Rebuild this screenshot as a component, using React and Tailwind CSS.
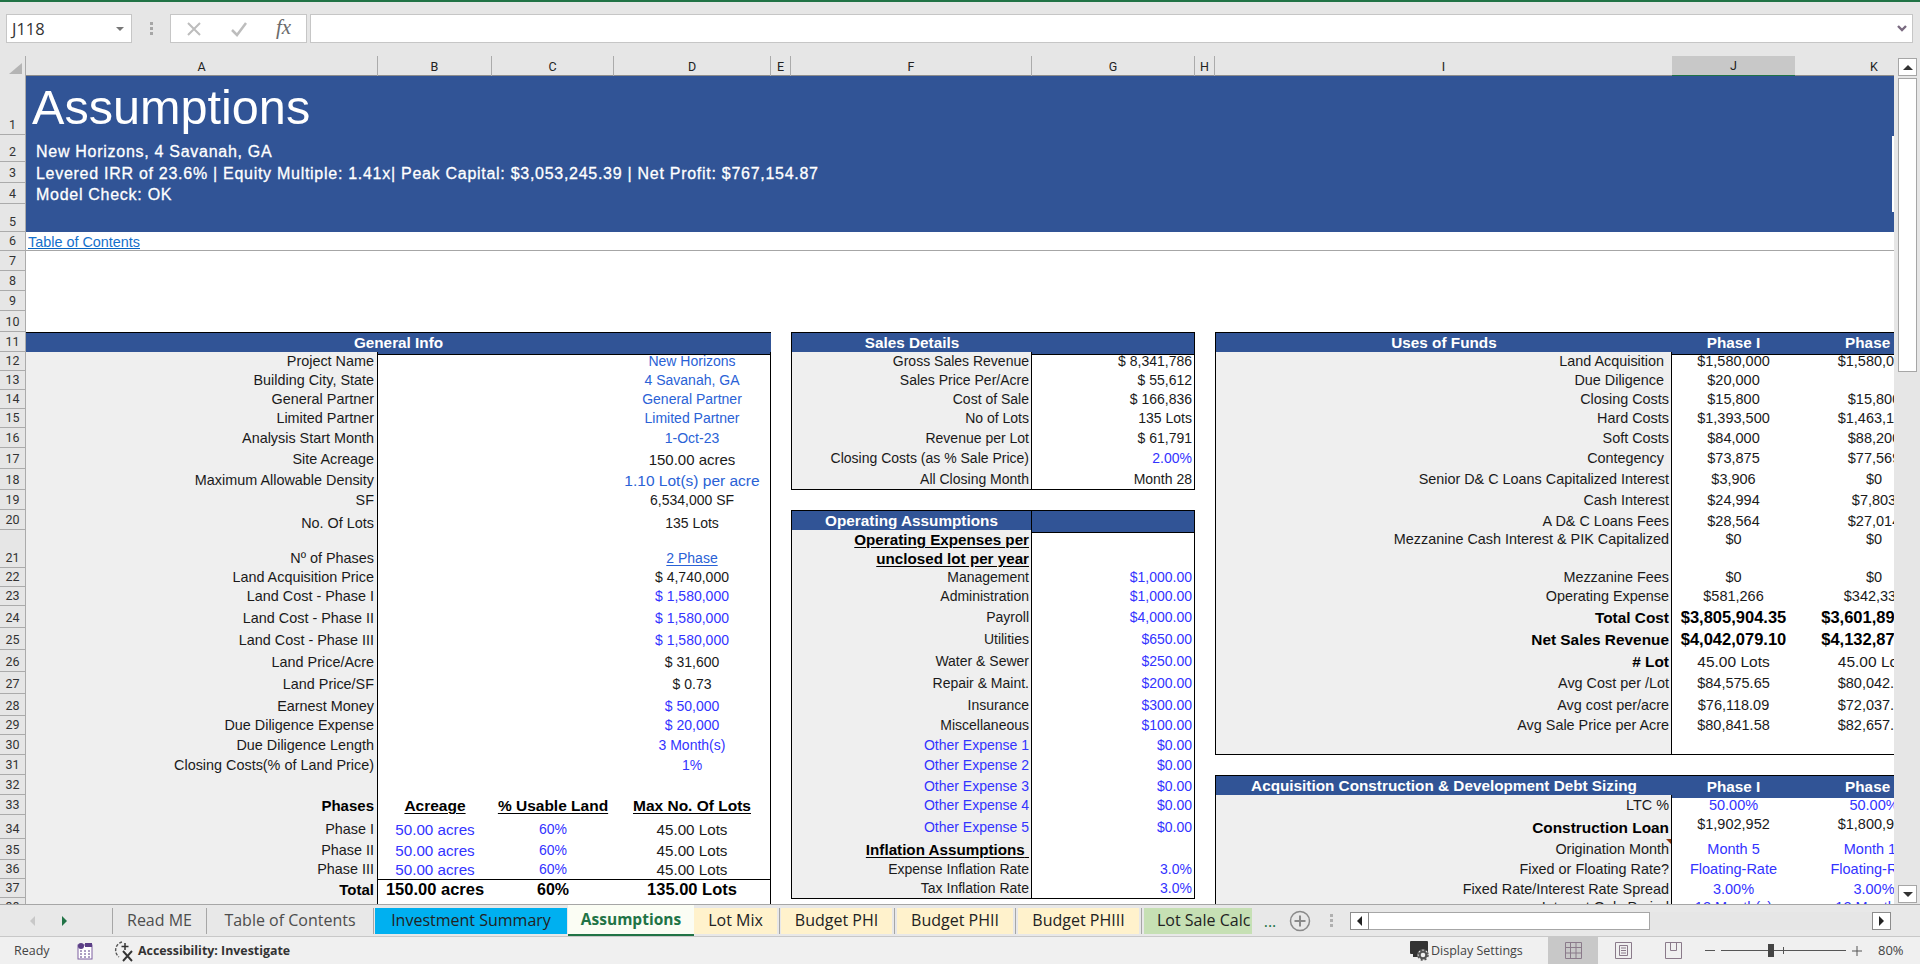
import React from 'react';

const COLS = 'grid-cols-[352px_114px_122px_157px_20px_241px_163px_20px_457px_123px_158px]';
const BLUE = 'text-[#3333ff]';
const SKY = 'text-[#2a62d6]';
const INK = 'text-[#1a1a1a]';
const BANNER = "bg-[#315496] text-white text-[16px] tracking-[0.72px] [-webkit-text-stroke:0.3px_white] pl-[10px]";

const colHeads = [
  ['A', 'border-r'], ['B', 'border-r'], ['C', 'border-r'], ['D', 'border-r'], ['E', 'border-r'], ['F', 'border-r'],
  ['G', 'border-r'], ['H', 'border-r'], ['I', ''], ['J', ''], ['K', ''],
];

// rows of the sheet, h is the row height as Excel drew it at 80%
const rows = [
  { n: 7, h: 'h-[20px]' },
  { n: 8, h: 'h-[20px]' },
  { n: 9, h: 'h-[20px]' },
  { n: 10, h: 'h-[21px]' },
  { n: 11, h: 'h-[20px]', head: true },
  { n: 12, h: 'h-[19px]', a: 'Project Name', d: 'New Horizons', dc: SKY, f: 'Gross Sales Revenue', g: '$ 8,341,786', i: 'Land Acquisition', ii: 1, j: '$1,580,000', k: '$1,580,000' },
  { n: 13, h: 'h-[19px]', a: 'Building City, State', d: '4 Savanah, GA', dc: SKY, f: 'Sales Price Per/Acre', g: '$ 55,612', i: 'Due Diligence', ii: 1, j: '$20,000' },
  { n: 14, h: 'h-[19px]', a: 'General Partner', d: 'General Partner', dc: SKY, f: 'Cost of Sale', g: '$ 166,836', i: 'Closing Costs', j: '$15,800', k: '$15,800' },
  { n: 15, h: 'h-[19px]', a: 'Limited Partner', d: 'Limited Partner', dc: SKY, f: 'No of Lots', g: '135 Lots', i: 'Hard Costs', j: '$1,393,500', k: '$1,463,175' },
  { n: 16, h: 'h-[20px]', a: 'Analysis Start Month', d: '1-Oct-23', dc: SKY, f: 'Revenue per Lot', g: '$ 61,791', i: 'Soft Costs', j: '$84,000', k: '$88,200' },
  { n: 17, h: 'h-[21px]', a: 'Site Acreage', d: '150.00 acres', dz: 'text-[15px]', f: 'Closing Costs (as % Sale Price)', g: '2.00%', gc: BLUE, i: 'Contegency', ii: 1, j: '$73,875', k: '$77,569' },
  { n: 18, h: 'h-[21px]', a: 'Maximum Allowable Density', d: '1.10 Lot(s) per acre', dz: 'text-[15.5px]', dc: SKY, f: 'All Closing Month', g: 'Month 28', fEnd: true, i: 'Senior D& C Loans Capitalized Interest', j: '$3,906', k: '$0' },
  { n: 19, h: 'h-[20px]', a: 'SF', d: '6,534,000 SF', i: 'Cash Interest', j: '$24,994', k: '$7,803' },
  { n: 20, h: 'h-[20px]', a: 'No. Of Lots', d: '135 Lots', opHead: true, i: 'A D& C Loans Fees', j: '$28,564', k: '$27,014' },
  { n: 21, h: 'h-[38px]', a: 'Nº of Phases', d: '2 Phase', dc: SKY, du: true, op: true, i: 'Mezzanine Cash Interest & PIK Capitalized', iTop: true, j: '$0', k: '$0' },
  { n: 22, h: 'h-[19px]', a: 'Land Acquisition Price', d: '$ 4,740,000', f: 'Management', g: '$1,000.00', gc: BLUE, i: 'Mezzanine Fees', j: '$0', k: '$0' },
  { n: 23, h: 'h-[19px]', a: 'Land Cost - Phase I', d: '$ 1,580,000', dc: BLUE, f: 'Administration', g: '$1,000.00', gc: BLUE, i: 'Operating Expense', j: '$581,266', k: '$342,331' },
  { n: 24, h: 'h-[22px]', a: 'Land Cost - Phase II', d: '$ 1,580,000', dc: BLUE, f: 'Payroll', g: '$4,000.00', gc: BLUE, i: 'Total Cost', b: true, j: '$3,805,904.35', k: '$3,601,890.00' },
  { n: 25, h: 'h-[22px]', a: 'Land Cost - Phase III', d: '$ 1,580,000', dc: BLUE, f: 'Utilities', g: '$650.00', gc: BLUE, i: 'Net Sales Revenue', b: true, j: '$4,042,079.10', k: '$4,132,870.00' },
  { n: 26, h: 'h-[22px]', a: 'Land Price/Acre', d: '$ 31,600', f: 'Water & Sewer', g: '$250.00', gc: BLUE, i: '# Lot', ib: true, j: '45.00 Lots', k: '45.00 Lots', jz: 'text-[15.5px]' },
  { n: 27, h: 'h-[22px]', a: 'Land Price/SF', d: '$ 0.73', f: 'Repair & Maint.', g: '$200.00', gc: BLUE, i: 'Avg Cost per /Lot', j: '$84,575.65', k: '$80,042.00' },
  { n: 28, h: 'h-[22px]', a: 'Earnest Money', d: '$ 50,000', dc: BLUE, f: 'Insurance', g: '$300.00', gc: BLUE, i: 'Avg cost per/acre', j: '$76,118.09', k: '$72,037.00' },
  { n: 29, h: 'h-[19px]', a: 'Due Diligence Expense', d: '$ 20,000', dc: BLUE, f: 'Miscellaneous', g: '$100.00', gc: BLUE, i: 'Avg Sale Price per Acre', j: '$80,841.58', k: '$82,657.00' },
  { n: 30, h: 'h-[20px]', a: 'Due Diligence Length', d: '3 Month(s)', dc: BLUE, f: 'Other Expense 1', fc: BLUE, g: '$0.00', gc: BLUE, usesEnd: true },
  { n: 31, h: 'h-[20px]', a: 'Closing Costs(% of Land Price)', d: '1%', dc: BLUE, f: 'Other Expense 2', fc: BLUE, g: '$0.00', gc: BLUE },
  { n: 32, h: 'h-[20px]', f: 'Other Expense 3', fc: BLUE, g: '$0.00', gc: BLUE, acqHead: true },
  { n: 33, h: 'h-[20px]', a: 'Phases', phaseHead: true, f: 'Other Expense 4', fc: BLUE, g: '$0.00', gc: BLUE, i: 'LTC %', j: '50.00%', k: '50.00%', jc: BLUE },
  { n: 34, h: 'h-[24px]', a: 'Phase I', b1: '50.00 acres', c1: '60%', d: '45.00 Lots', dz: 'text-[15.2px]', f: 'Other Expense 5', fc: BLUE, g: '$0.00', gc: BLUE, i: 'Construction Loan', ib: true, j: '$1,902,952', k: '$1,800,952', jTop: true },
  { n: 35, h: 'h-[21px]', a: 'Phase II', b1: '50.00 acres', c1: '60%', d: '45.00 Lots', dz: 'text-[15.2px]', fb: 'Inflation Assumptions', i: 'Origination Month', j: 'Month 5', k: 'Month 14', jc: BLUE },
  { n: 36, h: 'h-[19px]', a: 'Phase III', b1: '50.00 acres', c1: '60%', d: '45.00 Lots', dz: 'text-[15.2px]', f: 'Expense Inflation Rate', g: '3.0%', gc: BLUE, i: 'Fixed or Floating Rate?', j: 'Floating-Rate', k: 'Floating-Rate', jc: BLUE },
  { n: 37, h: 'h-[19px]', total: true, a: 'Total', b1: '150.00 acres', c1: '60%', d: '135.00 Lots', f: 'Tax Inflation Rate', g: '3.0%', gc: BLUE, fEnd: true, i: 'Fixed Rate/Interest Rate Spread', j: '3.00%', k: '3.00%', jc: BLUE },
  { n: 38, h: 'h-[19px]', i: 'Interest Only Period', j: '12 Month(s)', k: '12 Month(s)', jc: BLUE },
];

const RowHead = ({ n, h }) => (
  <div className={`${h} w-[26px] shrink-0 flex items-end justify-center bg-[#e6e6e6] border-r border-b border-[#ababab] text-[12.5px] leading-[18px] text-[#333] font-['Roboto',sans-serif]`}>
    {n}
  </div>
);

const HeadCell = ({ className = '', children }) => (
  <div className={`flex items-center justify-center pb-[2px] bg-[#315496] border-y border-black text-white font-bold text-[15.3px] ${className}`}>{children}</div>
);

const PhaseHead = ({ children }) => (
  <span className="font-bold text-[15.5px] text-black underline underline-offset-2">{children}</span>
);

function SheetRow({ r }) {
  const { n, h } = r;
  const inGeneral = n >= 12;
  const total = r.total;
  return (
    <div className="flex">
      <RowHead n={n} h={h} />
      <div className={`grid ${COLS} ${h} flex-none`}>
        {/* General Info */}
        {r.head && <HeadCell className="col-start-1 col-span-4">General Info</HeadCell>}
        {inGeneral && (
          <div className={`col-start-1 flex items-end justify-end pr-[3px] bg-[#efefef] border-r border-black ${total || r.phaseHead ? 'font-bold text-[15px] text-black' : `text-[14.4px] ${INK}`}`}>{r.a}</div>
        )}
        {inGeneral && (
          <div className={`col-start-2 flex items-end justify-center ${total ? 'border-t border-black font-bold text-[16.5px] text-black' : `text-[15.2px] ${BLUE}`}`}>
            {r.phaseHead ? <PhaseHead>Acreage</PhaseHead> : r.b1}
          </div>
        )}
        {inGeneral && (
          <div className={`col-start-3 flex items-end justify-center ${total ? 'border-t border-black font-bold text-[16px] text-black' : BLUE}`}>
            {r.phaseHead ? <PhaseHead>% Usable Land</PhaseHead> : r.c1}
          </div>
        )}
        {inGeneral && (
          <div className={`col-start-4 flex items-end justify-center border-r border-black ${total ? 'border-t font-bold text-[16.5px] text-black' : `${r.dz || ''} ${r.dc || INK}`}`}>
            {r.phaseHead ? <PhaseHead>Max No. Of Lots</PhaseHead> : <span className={r.du ? 'underline underline-offset-2' : ''}>{r.d}</span>}
          </div>
        )}

        {/* Sales Details and Operating Assumptions */}
        {r.head && <HeadCell className="col-start-6 border-l">Sales Details</HeadCell>}
        {r.head && <div className="col-start-7 bg-[#315496] border-y border-r border-black" />}
        {r.opHead && <HeadCell className="col-start-6 border-l border-r">Operating Assumptions</HeadCell>}
        {r.opHead && <div className="col-start-7 bg-[#315496] border-y border-r border-black" />}
        {r.op && (
          <div className="col-start-6 flex flex-col items-end justify-center bg-[#efefef] border-x border-black pr-[2px] font-bold text-[15.2px] text-black leading-[19px]">
            <span className="underline underline-offset-2">Operating Expenses per</span>
            <span className="underline underline-offset-2">unclosed lot per year</span>
          </div>
        )}
        {r.op && <div className="col-start-7 border-r border-black" />}
        {(r.f || r.fb) && (
          <div className={`col-start-6 flex items-center justify-end pr-[2px] bg-[#efefef] border-x border-black ${r.fEnd ? 'border-b' : ''} ${r.fb ? 'font-bold text-[15.2px] text-black' : r.fc || INK}`}>
            {r.fb ? <span className="underline underline-offset-2">{r.fb}&nbsp;</span> : r.f}
          </div>
        )}
        {(r.f || r.fb) && (
          <div className={`col-start-7 flex items-center justify-end pr-[2px] border-r border-black ${r.fEnd ? 'border-b' : ''} ${r.gc || INK}`}>{r.g}</div>
        )}

        {/* Uses of Funds and Debt Sizing */}
        {r.head && <HeadCell className="col-start-9 border-l">Uses of Funds</HeadCell>}
        {r.head && <HeadCell className="col-start-10">Phase I</HeadCell>}
        {r.head && <HeadCell className="col-start-11">Phase II</HeadCell>}
        {r.acqHead && <HeadCell className="col-start-9 border-l">Acquisition Construction &amp; Development Debt Sizing</HeadCell>}
        {r.acqHead && <HeadCell className="col-start-10 border-b-0">Phase I</HeadCell>}
        {r.acqHead && <HeadCell className="col-start-11 border-b-0">Phase II</HeadCell>}
        {n >= 12 && n <= 30 && (
          <div className={`col-start-9 flex justify-end bg-[#efefef] border-x border-black ${r.iTop ? 'items-start' : 'items-center'} ${r.usesEnd ? 'border-b' : ''} ${r.ii ? 'pr-[7px]' : 'pr-[2px]'} ${r.b || r.ib ? 'font-bold text-[15.4px] text-black' : `text-[14.4px] ${INK}`}`}>{r.i}</div>
        )}
        {n >= 33 && (
          <div className={`col-start-9 flex items-center justify-end pr-[2px] bg-[#efefef] border-x border-black ${r.ib ? 'font-bold text-[15.4px] text-black' : `text-[14.4px] ${INK}`}`}>{r.i}</div>
        )}
        {((n >= 12 && n <= 30) || n >= 33) && (
          <div className={`col-start-10 flex justify-center ${r.jTop || r.iTop ? 'items-start' : 'items-center'} ${r.usesEnd ? 'border-b border-black' : ''} ${r.b ? 'font-bold text-[16.5px] text-black' : `${r.jz || 'text-[14.5px]'} ${r.jc || INK}`}`}>{r.j}</div>
        )}
        {((n >= 12 && n <= 30) || n >= 33) && (
          <div className={`col-start-11 flex justify-center whitespace-nowrap ${r.jTop || r.iTop ? 'items-start' : 'items-center'} ${r.usesEnd ? 'border-b border-black' : ''} ${r.b ? 'font-bold text-[16.5px] text-black' : `${r.jz || 'text-[14.5px]'} ${r.jc || INK}`}`}>{r.k}</div>
        )}
      </div>
    </div>
  );
}

const BannerRow = ({ n, h, children, className = '' }) => (
  <div className="flex">
    <RowHead n={n} h={h} />
    <div className={`${h} flex-none w-[1868px] ${className}`}>{children}</div>
  </div>
);

const Sep = ({ className = 'mx-[2px]' }) => <div className={`w-px h-[26px] bg-[#a6a6a6] shrink-0 ${className}`} />;

const Tab = ({ w, bg, children }) => (
  <div className={`${w} ${bg} h-[26px] flex items-center justify-center shrink-0 overflow-hidden whitespace-nowrap text-[#222]`}>{children}</div>
);

const ViewBtn = ({ active, children }) => (
  <div className={`w-[50px] h-full flex items-center justify-center ${active ? 'bg-[#c8c8c8]' : ''}`}>{children}</div>
);

export default function App() {
  return (
    <div className="w-[1920px] h-[964px] overflow-hidden flex flex-col bg-[#e6e6e6] font-['Liberation_Sans',Arial,sans-serif] text-[14px] leading-[19px]">
      {/* title strip */}
      <div className="h-[2px] bg-[#217346] shrink-0" />

      {/* formula bar */}
      <div className="h-[54px] shrink-0 flex items-start pt-[12px] pl-[6px] pr-[7px] font-['Open_Sans',sans-serif]">
        <div className="w-[126px] h-[29px] bg-white border border-[#c6c6c6] flex items-center justify-between pl-[5px] pr-[7px] text-[16.5px] text-[#333]">
          J118
          <span className="w-0 h-0 border-x-[4px] border-x-transparent border-t-[4px] border-t-[#777]" />
        </div>
        <div className="w-[38px] h-[29px] flex flex-col items-center justify-center gap-[2px]">
          <span className="w-[3px] h-[3px] bg-[#a6a6a6]" />
          <span className="w-[3px] h-[3px] bg-[#a6a6a6]" />
          <span className="w-[3px] h-[3px] bg-[#a6a6a6]" />
        </div>
        <div className="w-[137px] h-[29px] bg-white border border-[#c6c6c6] flex items-center pl-[15px] gap-[28px]">
          <svg width="16" height="16" viewBox="0 0 16 16" className="shrink-0"><path d="M2 2l12 12M14 2L2 14" stroke="#bdbdbd" strokeWidth="2" fill="none" /></svg>
          <svg width="18" height="16" viewBox="0 0 18 16" className="shrink-0"><path d="M2 9l5 5L16 2" stroke="#bdbdbd" strokeWidth="2.5" fill="none" /></svg>
          <span className="font-['Liberation_Serif',serif] italic text-[21px] text-[#6b6b6b] -mt-[3px]">fx</span>
        </div>
        <div className="ml-[3px] flex-1 h-[29px] bg-white border border-[#c6c6c6] flex items-center justify-end pr-[5px]">
          <svg width="10" height="8" viewBox="0 0 10 8"><path d="M1 1l4 4 4-4" stroke="#7a6a80" strokeWidth="2.4" fill="none" /></svg>
        </div>
      </div>

      <div className="flex-1 min-h-0 flex">
        <div className="w-[1894px] shrink-0 flex flex-col overflow-hidden relative">
          {/* column letters */}
          <div className="flex shrink-0 h-[20px] font-['Roboto',sans-serif] text-[12.5px] text-[#222]">
            <div className="w-[26px] shrink-0 flex items-end justify-end pr-[3px] pb-[2px] border-r border-[#ababab]">
              <svg width="13" height="11" viewBox="0 0 13 11"><path d="M13 0v11H0z" fill="#b4b4b4" /></svg>
            </div>
            <div className={`grid ${COLS} flex-none border-b border-[#8c8c8c]`}>
              {colHeads.map(([c, b]) => (
                <div key={c} className={`flex items-center justify-center ${b} border-[#ababab] ${c === 'J' ? 'bg-[#c8c8c8] border-b-2 border-b-[#217346] -mb-px' : ''}`}>{c}</div>
              ))}
            </div>
          </div>

          <div className="flex-1 min-h-0 overflow-hidden bg-white">
            {/* blue banner */}
            <BannerRow n={1} h="h-[59px]" className="bg-[#315496] text-white text-[48.6px] leading-[62px] pl-[6px]">Assumptions</BannerRow>
            <BannerRow n={2} h="h-[27px]" className={`${BANNER} leading-[22px] pt-[6px]`}>New Horizons, 4 Savanah, GA</BannerRow>
            <BannerRow n={3} h="h-[21px]" className={`${BANNER} leading-[23px]`}>Levered IRR of 23.6% | Equity Multiple: 1.41x| Peak Capital: $3,053,245.39 | Net Profit: $767,154.87</BannerRow>
            <BannerRow n={4} h="h-[21px]" className={`${BANNER} leading-[23px]`}>Model Check: OK</BannerRow>
            <BannerRow n={5} h="h-[28px]" className="bg-[#315496]" />
            <BannerRow n={6} h="h-[19px]" className="border-b border-[#a6a6a6] pl-[2px] leading-[20px] text-[14.4px]">
              <span className="text-[#1470cc] underline decoration-[#0563c1]">Table of Contents</span>
            </BannerRow>

            {rows.map((r) => <SheetRow key={r.n} r={r} />)}
          </div>

          {/* overlays on the grid */}
          <div className="absolute left-[1892px] top-[80px] w-[2px] h-[76px] bg-white" />
          <div className="absolute left-[1666px] top-[783px] w-0 h-0 border-l-[5px] border-l-transparent border-t-[5px] border-t-[#8a3a10]" />
        </div>

        {/* vertical scrollbar */}
        <div className="ml-[4px] w-[19px] shrink-0 flex flex-col pt-[2px] pb-[1px]">
          <div className="h-[18px] bg-white border border-[#a6a6a6] flex items-center justify-center">
            <span className="w-0 h-0 border-x-[5px] border-x-transparent border-b-[5px] border-b-[#333]" />
          </div>
          <div className="h-[294px] mt-[2px] bg-white border border-[#a6a6a6]" />
          <div className="flex-1" />
          <div className="h-[18px] bg-white border border-[#a6a6a6] flex items-center justify-center">
            <span className="w-0 h-0 border-x-[5px] border-x-transparent border-t-[5px] border-t-[#333]" />
          </div>
        </div>
      </div>

      {/* sheet tabs */}
      <div className="h-[33px] shrink-0 bg-[#e8e8e8] border-t border-t-[#a6a6a6] border-b border-b-[#c8c8c8] flex items-center font-['Open_Sans',sans-serif] text-[16px]">
        <div className="w-[112px] shrink-0 flex items-center pl-[30px] gap-[27px]">
          <span className="w-0 h-0 border-y-[5px] border-y-transparent border-r-[5px] border-r-[#c8c8c8]" />
          <span className="w-0 h-0 border-y-[5px] border-y-transparent border-l-[5px] border-l-[#217346]" />
        </div>
        <Sep className="" />
        <div className="w-[93px] text-center text-[#4d4d4d] shrink-0">Read ME</div>
        <Sep className="" />
        <div className="w-[166px] text-center text-[#4d4d4d] shrink-0">Table of Contents</div>
        <Sep className="mr-[1px]" />
        <Tab w="w-[192px]" bg="bg-[#00b0f0]">Investment Summary</Tab>
        <div className="w-[126px] h-[31px] ml-[1px] bg-[#fbfdf4] border-b-2 border-[#217346] flex items-center justify-center shrink-0 font-bold text-[15.5px] text-[#217346]">Assumptions</div>
        <Tab w="w-[83px]" bg="bg-[#fff2cc]">Lot Mix</Tab>
        <Sep className="ml-[2px] mr-[1px]" />
        <Tab w="w-[111px]" bg="bg-[#fff2cc]">Budget PHI</Tab>
        <Sep className="ml-[2px] mr-[2px]" />
        <Tab w="w-[116px]" bg="bg-[#fff2cc]">Budget PHII</Tab>
        <Sep className="ml-[2px] mr-[2px]" />
        <Tab w="w-[121px]" bg="bg-[#fff2cc]">Budget PHIII</Tab>
        <Sep className="ml-[2px] mr-[2px]" />
        <div className="w-[108px] h-[26px] bg-[#c6e0b4] flex items-center pl-[13px] shrink-0 overflow-hidden whitespace-nowrap text-[#222]">Lot Sale Calc</div>
        <div className="w-[36px] text-center text-[#217346] leading-[12px] shrink-0">...</div>
        <svg width="24" height="24" viewBox="0 0 24 24" className="shrink-0"><circle cx="12" cy="12" r="9.5" fill="none" stroke="#8a8a8a" strokeWidth="1.5" /><path d="M12 6.5v11M6.5 12h11" stroke="#8a8a8a" strokeWidth="2" /></svg>
        <div className="w-[11px] shrink-0" />
        <div className="w-[26px] shrink-0 flex flex-col items-center gap-[2px] pr-[10px]">
          <span className="w-[3px] h-[3px] bg-[#b0b0b0]" />
          <span className="w-[3px] h-[3px] bg-[#b0b0b0]" />
          <span className="w-[3px] h-[3px] bg-[#b0b0b0]" />
        </div>
        <div className="ml-px w-[541px] h-[18px] flex shrink-0 bg-[#e6e6e6]">
          <div className="w-[19px] bg-white border border-[#8c8c8c] flex items-center justify-center">
            <span className="w-0 h-0 border-y-[5px] border-y-transparent border-r-[5px] border-r-[#222]" />
          </div>
          <div className="w-[281px] bg-white border-y border-r border-[#a6a6a6]" />
          <div className="flex-1" />
          <div className="w-[19px] bg-white border border-[#8c8c8c] flex items-center justify-center">
            <span className="w-0 h-0 border-y-[5px] border-y-transparent border-l-[5px] border-l-[#222]" />
          </div>
        </div>
      </div>

      {/* status bar */}
      <div className="h-[27px] shrink-0 bg-[#f0f0f0] flex items-center font-['Open_Sans',sans-serif] text-[12.5px] text-[#444]">
        <span className="ml-[14px] w-[63px] shrink-0">Ready</span>
        <svg width="16" height="18" viewBox="0 0 16 18" className="shrink-0"><rect x="1" y="3" width="14" height="14" fill="#fff" stroke="#7d5fa0" /><rect x="1" y="1" width="6" height="6" rx="3" fill="#5b3f86" /><rect x="8" y="1" width="7" height="4" fill="#5b3f86" /><path d="M3 9h2M7 9h2M11 9h2M3 12h2M7 12h2M11 12h2M3 15h2M7 15h2M11 15h2" stroke="#5b3f86" /></svg>
        <svg width="22" height="24" viewBox="0 0 22 24" className="shrink-0 ml-[21px]"><path d="M8 3a8.5 8.5 0 0 0-3 15" fill="none" stroke="#555" strokeWidth="1.4" strokeDasharray="3 1.5" /><path d="M11 4v7M7.5 7.5h7" stroke="#333" strokeWidth="1.5" /><path d="M9 12l9 10M18 12l-9 10" stroke="#333" strokeWidth="1.9" /></svg>
        <span className="ml-[2px] font-bold text-[12.4px] text-[#333] whitespace-nowrap">Accessibility: Investigate</span>
        <div className="flex-1" />
        <svg width="21" height="21" viewBox="0 0 21 21" className="shrink-0"><rect x="1" y="1" width="18" height="13" rx="1" fill="#333" /><rect x="4" y="14" width="7" height="3" fill="#333" /><circle cx="14" cy="15" r="5.5" fill="#f0f0f0" /><circle cx="14" cy="15" r="3.4" fill="none" stroke="#555" strokeWidth="2.2" /><circle cx="14" cy="15" r="5" fill="none" stroke="#555" strokeWidth="1.5" strokeDasharray="2 2" /></svg>
        <span className="ml-[1px] w-[117px] whitespace-nowrap">Display Settings</span>
        <div className="h-full flex">
          <ViewBtn active>
            <svg width="17" height="17" viewBox="0 0 17 17"><path d="M.5.5h16v16H.5zM.5 5.5h16M.5 11h16M5.5.5v16M11 .5v16" fill="none" stroke="#8a7a8a" /></svg>
          </ViewBtn>
          <ViewBtn>
            <svg width="17" height="17" viewBox="0 0 17 17"><path d="M.5.5h16v16H.5z" fill="none" stroke="#8a7a8a" /><path d="M4.5 3.5h8v10h-8zM6 6h5M6 8.5h5M6 11h5" fill="none" stroke="#8a7a8a" /></svg>
          </ViewBtn>
          <ViewBtn>
            <svg width="17" height="17" viewBox="0 0 17 17"><path d="M.5.5h16v16H.5zM5.5.5v8h6v-8" fill="none" stroke="#8a7a8a" /></svg>
          </ViewBtn>
        </div>
        <div className="ml-[7px] w-[10px] h-[1.5px] bg-[#555] shrink-0" />
        <div className="ml-[6px] w-[125px] h-[1px] bg-[#555] shrink-0 relative">
          <div className="absolute left-[47px] -top-[6px] w-[6px] h-[13px] bg-[#444]" />
          <div className="absolute left-[62px] -top-[3px] w-px h-[7px] bg-[#555]" />
        </div>
        <svg width="10" height="10" viewBox="0 0 10 10" className="ml-[6px] shrink-0"><path d="M5 0v10M0 5h10" stroke="#555" /></svg>
        <span className="ml-[16px] w-[42px] shrink-0 text-[13px]">80%</span>
      </div>
    </div>
  );
}
